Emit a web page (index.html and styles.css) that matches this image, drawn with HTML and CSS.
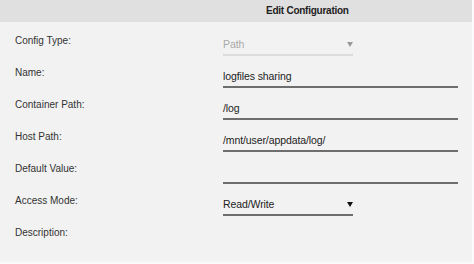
FILE: index.html
```
<!DOCTYPE html>
<html>
<head>
    <title>Edit Configuration</title>
    <meta name="viewport" content="width=device-width, initial-scale=1.0">
    <link rel="stylesheet" href="styles.css">
</head>
<body>
    <div class="dialog">
        <!-- Title bar -->
        <div class="titlebar">Edit Configuration</div>

        <!-- Fields -->
        <div class="form">
            <div class="row">
                <div class="label">Config Type:</div>
                <div class="field select disabled">Path<span class="arrow"></span></div>
            </div>
            <div class="row">
                <div class="label">Name:</div>
                <div class="field">logfiles sharing</div>
            </div>
            <div class="row">
                <div class="label">Container Path:</div>
                <div class="field">/log</div>
            </div>
            <div class="row">
                <div class="label">Host Path:</div>
                <div class="field">/mnt/user/appdata/log/</div>
            </div>
            <div class="row">
                <div class="label">Default Value:</div>
                <div class="field"></div>
            </div>
            <div class="row">
                <div class="label">Access Mode:</div>
                <div class="field select">Read/Write<span class="arrow"></span></div>
            </div>
            <div class="row">
                <div class="label">Description:</div>
            </div>
        </div>
    </div>
</body>
</html>
```

FILE: styles.css
```
body {
    margin: 0;
    background: #fafafa;
    font-family: 'Liberation Sans', Arial, sans-serif;
    font-size: 10.5px;
}

.dialog {
    width: 472px;
    height: 262px;
    background: #f2f2f2;
    overflow: hidden;
}

/* Title bar */
.titlebar {
    height: 22px;
    line-height: 21px;
    background: #e0e0e0;
    padding-left: 266px;
    font-weight: bold;
    font-size: 10px;
    letter-spacing: -0.25px;
    color: #222;
}

/* Form rows */
.form {
    padding-top: 4px;
}

.row {
    display: flex;
    height: 32px;
}

.label {
    width: 208px;
    padding-left: 15px;
    padding-top: 7px;
    line-height: 16px;
    font-size: 10px;
    color: #333;
}

.field {
    position: relative;
    width: 235px;
    height: 16px;
    margin-top: 10px;
    line-height: 16px;
    padding-bottom: 2px;
    border-bottom: 2px solid #6e6e6e;
    letter-spacing: -0.1px;
    color: #222;
}

.select {
    width: 130px;
}

.select.disabled {
    color: #aaa;
    border-bottom-color: #dcdcdc;
}

.arrow {
    position: absolute;
    right: 0;
    top: 6px;
    border-left: 3px solid transparent;
    border-right: 3px solid transparent;
    border-top: 5px solid #111;
}

.disabled .arrow {
    border-top-color: #999;
}
```
